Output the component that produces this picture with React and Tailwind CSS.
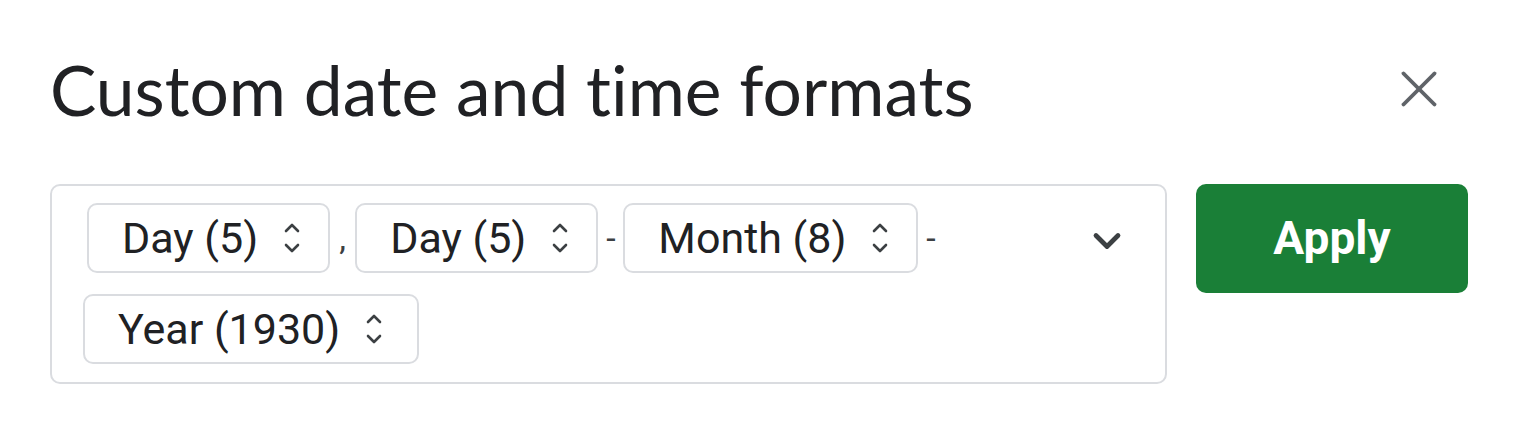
import { X, ChevronDown } from "lucide-react";

function Stepper() {
  return (
    <svg width="20" height="36" viewBox="0 0 20 36" fill="none" stroke="#3c4043" strokeWidth="2.6" strokeLinecap="round" strokeLinejoin="round">
      <path d="M4 11 L10 5 L16 11" />
      <path d="M4 25 L10 31 L16 25" />
    </svg>
  );
}

function Chip({ label, wide }) {
  return (
    <div className={`flex items-center h-[70px] pl-[33px] border-2 border-[#dadce0] rounded-[10px] gap-[24px] ${wide ? "pr-[33px]" : "pr-[26px]"}`}>
      <span className="text-[43px] text-[#202124] leading-none">{label}</span>
      <Stepper />
    </div>
  );
}

function Sep({ children }) {
  return <span className="w-[25px] text-center text-[34px] text-[#3c4043]">{children}</span>;
}

export default function App() {
  return (
    <div className="w-[1536px] h-[438px] bg-white" style={{ fontFamily: "Roboto, 'Liberation Sans', sans-serif" }}>
      <div className="flex items-start justify-between pl-[50px] pr-[86px] pt-[44px]">
        <h1 className="text-[69.5px] leading-[90px] text-[#202124] [font-variant-ligatures:none]" style={{ fontFamily: "Lato, 'Open Sans', sans-serif" }}>
          Custom date and time formats
        </h1>
        <X className="mt-[14px]" size={62} color="#5f6368" strokeWidth={1.5} />
      </div>

      <div className="flex items-start gap-[29px] pl-[50px] mt-[50px]">
        <div className="w-[1117px] h-[200px] border-2 border-[#dadce0] rounded-[10px] flex items-start pl-[35px] pr-[36px] pt-[17px]">
          <div className="flex flex-col flex-1 gap-[21px]">
            <div className="flex items-center">
              <Chip label="Day (5)" />
              <Sep>,</Sep>
              <Chip label="Day (5)" />
              <Sep>-</Sep>
              <Chip label="Month (8)" />
              <Sep>-</Sep>
            </div>
            <div className="flex items-center -ml-[4px]">
              <Chip label="Year (1930)" wide />
            </div>
          </div>
          <ChevronDown className="mt-[16px]" size={44} color="#3c4043" strokeWidth={2.6} />
        </div>

        <button className="w-[272px] h-[109px] bg-[#1a7f37] rounded-[10px] text-white text-[46px] font-bold">
          Apply
        </button>
      </div>
    </div>
  );
}
